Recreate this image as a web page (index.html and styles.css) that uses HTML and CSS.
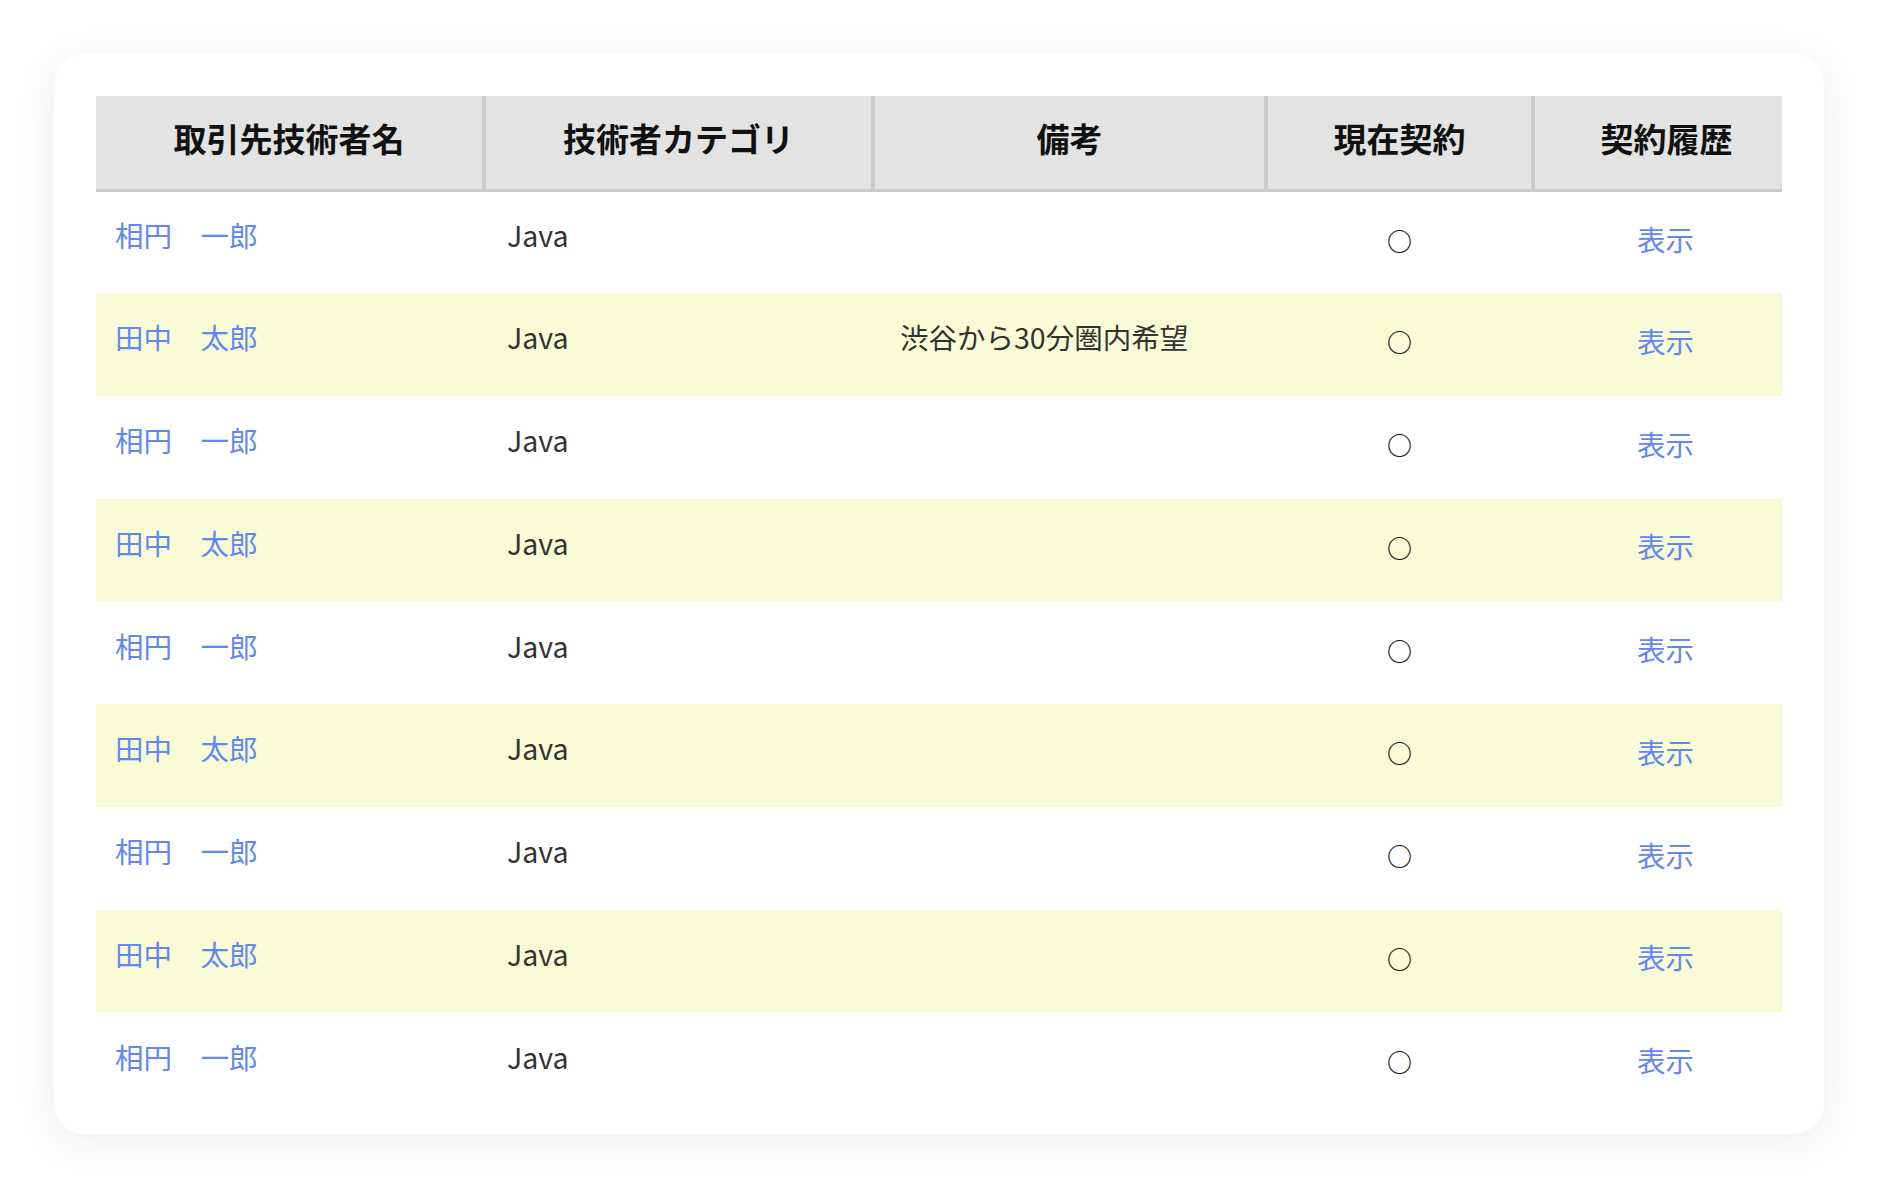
FILE: index.html
```html
<!DOCTYPE html>
<html lang="ja">
<head>
<meta charset="utf-8">
<title>取引先技術者一覧</title>
<link rel="stylesheet" href="styles.css">
</head>
<body>
<main class="card">
  <table class="list">
    <colgroup>
      <col class="c-name">
      <col class="c-cat">
      <col class="c-note">
      <col class="c-now">
      <col class="c-hist">
    </colgroup>
    <thead>
      <tr>
        <th class="first">取引先技術者名</th>
        <th>技術者カテゴリ</th>
        <th>備考</th>
        <th>現在契約</th>
        <th class="last">契約履歴</th>
      </tr>
    </thead>
    <tbody>
      <tr><td class="name"><a href="#">相円　一郎</a></td><td class="cat">Java</td><td class="note"></td><td class="now">○</td><td class="hist"><a href="#">表示</a></td></tr>
      <tr class="alt"><td class="name"><a href="#">田中　太郎</a></td><td class="cat">Java</td><td class="note">渋谷から30分圏内希望</td><td class="now">○</td><td class="hist"><a href="#">表示</a></td></tr>
      <tr><td class="name"><a href="#">相円　一郎</a></td><td class="cat">Java</td><td class="note"></td><td class="now">○</td><td class="hist"><a href="#">表示</a></td></tr>
      <tr class="alt"><td class="name"><a href="#">田中　太郎</a></td><td class="cat">Java</td><td class="note"></td><td class="now">○</td><td class="hist"><a href="#">表示</a></td></tr>
      <tr><td class="name"><a href="#">相円　一郎</a></td><td class="cat">Java</td><td class="note"></td><td class="now">○</td><td class="hist"><a href="#">表示</a></td></tr>
      <tr class="alt"><td class="name"><a href="#">田中　太郎</a></td><td class="cat">Java</td><td class="note"></td><td class="now">○</td><td class="hist"><a href="#">表示</a></td></tr>
      <tr><td class="name"><a href="#">相円　一郎</a></td><td class="cat">Java</td><td class="note"></td><td class="now">○</td><td class="hist"><a href="#">表示</a></td></tr>
      <tr class="alt"><td class="name"><a href="#">田中　太郎</a></td><td class="cat">Java</td><td class="note"></td><td class="now">○</td><td class="hist"><a href="#">表示</a></td></tr>
      <tr><td class="name"><a href="#">相円　一郎</a></td><td class="cat">Java</td><td class="note"></td><td class="now">○</td><td class="hist"><a href="#">表示</a></td></tr>
    </tbody>
  </table>
</main>
</body>
</html>
```

FILE: styles.css
```css
* { box-sizing: border-box; }

html, body {
  margin: 0;
  padding: 0;
  background: #ffffff;
}

body {
  padding: 54px;
  font-family: "Noto Sans CJK JP", "Noto Sans", sans-serif;
  color: #333333;
}

.card {
  background: #ffffff;
  border-radius: 30px;
  box-shadow: 0 8px 40px rgba(0, 0, 0, 0.07);
  padding: 42px 42px 19px;
}

.list {
  width: 1686px;
  table-layout: fixed;
  border-collapse: separate;
  border-spacing: 0;
}

.c-name { width: 388px; }
.c-cat { width: 389px; }
.c-note { width: 393px; }
.c-now { width: 267px; }
.c-hist { width: 249px; }

.list th {
  height: 96px;
  padding: 0 0 10px;
  background: #e3e3e3;
  border-left: 2px solid #cbcbcb;
  border-right: 2px solid #cbcbcb;
  border-bottom: 3px solid #cacaca;
  font-size: 33px;
  font-weight: 700;
  color: #111111;
  text-align: center;
  vertical-align: middle;
}

.list th.first {
  border-left: 0;
}

.list th.last {
  border-right: 0;
  padding-left: 16px;
}

.list td {
  height: 102.75px;
  padding: 0 0 14px 20px;
  font-size: 28.5px;
  line-height: 1.2;
  vertical-align: middle;
  white-space: nowrap;
}

.list tbody tr:first-child td {
  height: 101px;
}

.list tr.alt td {
  background: #f8fbd5;
}

.list td.name {
  padding-left: 19px;
}

.list td.cat {
  padding-left: 23px;
}

.list td.note {
  padding-left: 27px;
}

.list td.now {
  padding: 0 0 6px;
  text-align: center;
  font-size: 25px;
  font-weight: 700;
  color: #1a1a1a;
}

.list td.hist {
  padding: 0 0 7px 16px;
  text-align: center;
}

.list a {
  color: #6287f2;
  text-decoration: none;
}
```
